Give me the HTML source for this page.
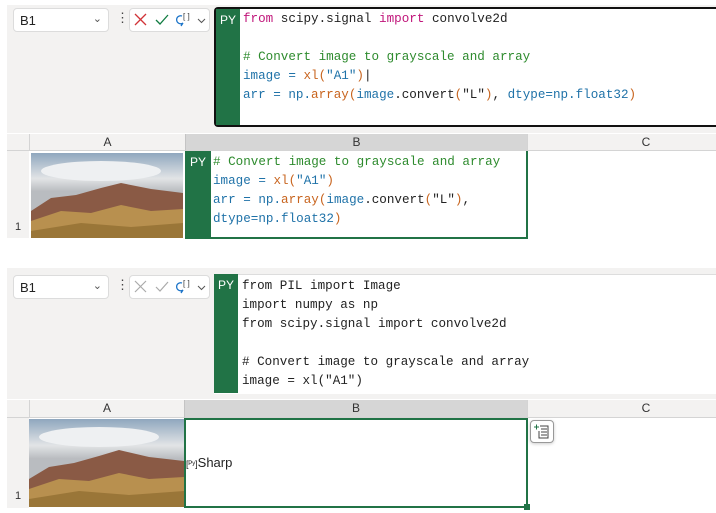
<!DOCTYPE html>
<html><head><meta charset="utf-8"><style>
*{margin:0;padding:0;box-sizing:border-box}
body{width:716px;height:513px;background:#fff;position:relative;overflow:hidden;font-family:"Liberation Sans",sans-serif}
.abs{position:absolute}
.panel{background:#f3f2f1}
.nb{background:#fff;border:1px solid #dcdcdc;border-radius:4px;font-size:13px;color:#222}
.code{font-family:"Liberation Mono",monospace;font-size:12.6px;line-height:19px;white-space:pre;color:#222}
.k{color:#c0157a}.c{color:#2e8b2e}.v{color:#1f72a8}.f{color:#c8641e}.p{color:#c8641e}
.gut{background:#217346;color:#fff;font-size:12px;font-family:"Liberation Sans",sans-serif}
.hdr{background:#f3f2f1;border-bottom:1px solid #d4d4d4;font-size:12px;color:#333;text-align:center;line-height:17px}
</style></head><body>

<!-- TOP -->
<div class="abs panel" style="left:7px;top:5px;width:709px;height:128px"></div>
<div class="abs nb" style="left:13px;top:8px;width:96px;height:24px;padding:4px 6px">B1<span style="position:absolute;right:6px;top:3px;font-size:11px;color:#555">&#8964;</span></div>
<div class="abs" style="left:116px;top:10px;font-size:13px;color:#444">&#8942;</div>
<div class="abs nb" style="left:129px;top:8px;width:81px;height:24px"></div>
<svg class="abs" style="left:133px;top:12px" width="76" height="16"><path d="M2 2L13 13M13 2L2 13" stroke="#d13438" stroke-width="1.3"/><path d="M23 8L27 12L35 3" stroke="#107c41" stroke-width="1.3" fill="none"/><path d="M49 4a4 4 0 1 0 1 7l-2 3" stroke="#1a73c8" stroke-width="1.3" fill="none"/><text x="50" y="7" font-size="8" fill="#333">[ ]</text><path d="M65 7l3.5 3.5L72 7" stroke="#555" fill="none"/></svg>
<div class="abs" style="left:214px;top:7px;width:502px;height:120px;border:2px solid #111;border-right:none;border-radius:4px 0 0 4px;background:#fff"></div>
<div class="abs gut" style="left:216px;top:9px;width:24px;height:116px;padding:4px 0 0 4px">PY</div>
<div class="abs code" style="left:243px;top:10px"><span class="k">from</span> scipy.signal <span class="k">import</span> convolve2d

<span class="c"># Convert image to grayscale and array</span>
<span class="v">image = </span><span class="f">xl</span><span class="p">(</span><span class="v">"A1"</span><span class="p">)</span>|
<span class="v">arr = np.</span><span class="f">array</span><span class="p">(</span><span class="v">image</span>.convert<span class="p">(</span>"L"<span class="p">)</span>, <span class="v">dtype=np.float32</span><span class="p">)</span></div>

<div class="abs hdr" style="left:7px;top:134px;width:22px;height:17px"></div>
<div class="abs hdr" style="left:29px;top:134px;width:156px;height:17px;border-left:1px solid #d4d4d4">A</div>
<div class="abs hdr" style="left:185px;top:134px;width:342px;height:17px;background:#d6d6d6;border-left:1px solid #c4c4c4">B</div>
<div class="abs hdr" style="left:527px;top:134px;width:189px;height:17px;border-left:1px solid #d4d4d4;padding-left:48px">C</div>
<div class="abs" style="left:7px;top:151px;width:22px;height:87px;background:#f3f2f1;font-size:11px;color:#333;padding:70px 0 0 8px">1</div>
<svg class="abs" style="left:31px;top:153px" width="152" height="85"><defs><linearGradient id="s" x1="0" y1="0" x2="0" y2="1"><stop offset="0" stop-color="#8fa7be"/><stop offset=".3" stop-color="#e2e4e6"/><stop offset=".45" stop-color="#b9bcc0"/></linearGradient></defs><rect width="152" height="85" fill="url(#s)"/><ellipse cx="70" cy="18" rx="60" ry="10" fill="#eef0f2"/><path d="M0 58L20 45L45 42L70 35L90 30L120 36L152 40L152 85L0 85Z" fill="#8a5a45"/><path d="M0 68L30 58L60 60L90 52L120 58L152 56L152 85L0 85Z" fill="#b8904f"/><path d="M0 78L50 70L100 74L152 70L152 85L0 85Z" fill="#9a7638"/></svg>
<div class="abs" style="left:185px;top:151px;width:343px;height:88px;border:2px solid #217346;border-top:none"></div>
<div class="abs gut" style="left:185px;top:151px;width:26px;height:87px;padding:4px 0 0 5px">PY</div>
<div class="abs code" style="left:213px;top:153px"><span class="c"># Convert image to grayscale and array</span>
<span class="v">image = </span><span class="f">xl</span><span class="p">(</span><span class="v">"A1"</span><span class="p">)</span>
<span class="v">arr = np.</span><span class="f">array</span><span class="p">(</span><span class="v">image</span>.convert<span class="p">(</span>"L"<span class="p">)</span>,
<span class="v">dtype=np.float32</span><span class="p">)</span></div>

<!-- BOTTOM -->
<div class="abs panel" style="left:7px;top:268px;width:709px;height:131px"></div>
<div class="abs nb" style="left:13px;top:275px;width:96px;height:24px;padding:4px 6px">B1<span style="position:absolute;right:6px;top:3px;font-size:11px;color:#555">&#8964;</span></div>
<div class="abs" style="left:116px;top:277px;font-size:13px;color:#444">&#8942;</div>
<div class="abs nb" style="left:129px;top:275px;width:81px;height:24px"></div>
<svg class="abs" style="left:133px;top:279px" width="76" height="16"><path d="M2 2L13 13M13 2L2 13" stroke="#aaa" stroke-width="1.2"/><path d="M23 8L27 12L35 3" stroke="#aaa" stroke-width="1.2" fill="none"/><path d="M49 4a4 4 0 1 0 1 7l-2 3" stroke="#1a73c8" stroke-width="1.3" fill="none"/><text x="50" y="7" font-size="8" fill="#333">[ ]</text><path d="M65 7l3.5 3.5L72 7" stroke="#555" fill="none"/></svg>
<div class="abs" style="left:214px;top:274px;width:502px;height:120px;background:#fff;border-top:1px solid #ddd"></div>
<div class="abs gut" style="left:214px;top:274px;width:24px;height:119px;padding:4px 0 0 4px">PY</div>
<div class="abs code" style="left:242px;top:277px">from PIL import Image
import numpy as np
from scipy.signal import convolve2d

# Convert image to grayscale and array
image = xl("A1")</div>

<div class="abs hdr" style="left:7px;top:400px;width:22px;height:18px"></div>
<div class="abs hdr" style="left:29px;top:400px;width:155px;height:18px;border-left:1px solid #d4d4d4">A</div>
<div class="abs hdr" style="left:184px;top:400px;width:343px;height:18px;background:#d6d6d6;border-left:1px solid #c4c4c4">B</div>
<div class="abs hdr" style="left:527px;top:400px;width:189px;height:18px;border-left:1px solid #d4d4d4;padding-left:48px">C</div>
<div class="abs" style="left:7px;top:418px;width:22px;height:90px;background:#f3f2f1;font-size:11px;color:#333;padding:72px 0 0 8px">1</div>
<svg class="abs" style="left:29px;top:419px" width="155" height="88"><rect width="155" height="88" fill="url(#s)"/><ellipse cx="70" cy="18" rx="60" ry="10" fill="#eef0f2"/><path d="M0 60L20 48L45 44L70 37L90 31L120 38L155 42L155 88L0 88Z" fill="#8a5a45"/><path d="M0 70L30 60L60 62L90 54L120 60L155 58L155 88L0 88Z" fill="#b8904f"/><path d="M0 80L50 72L100 76L155 72L155 88L0 88Z" fill="#9a7638"/></svg>
<div class="abs" style="left:184px;top:418px;width:344px;height:90px;border:2px solid #217346"></div>
<div class="abs" style="left:186px;top:455px;font-size:13px;color:#222"><span style="font-size:9px">[ᴾʸ]</span>Sharp</div>
<div class="abs" style="left:524px;top:504px;width:6px;height:6px;background:#217346"></div>
<div class="abs" style="left:530px;top:420px;width:24px;height:23px;border:1px solid #999;border-radius:4px;background:#fff;box-shadow:0 1px 3px rgba(0,0,0,.2)"><svg width="22" height="21"><path d="M9 5h8v12H8v-7M10 8h6M10 11h6M10 14h6" stroke="#444" fill="none"/><path d="M3 6h5M5.5 3.5v5" stroke="#217346"/></svg></div>
</body></html>
